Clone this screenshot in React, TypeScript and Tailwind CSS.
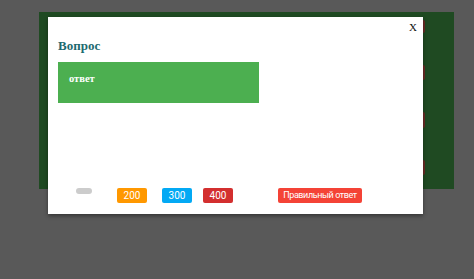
import React from "react";

const serif = { fontFamily: '"Liberation Serif", "DejaVu Serif", serif' };

export default function App() {
  return (
    <div
      className="relative w-[474px] h-[279px] overflow-hidden bg-[#595959] pt-[12px] pl-[39px]"
      style={{ fontFamily: 'Roboto, "Liberation Sans", Arial, sans-serif' }}
    >
      {/* board behind the modal */}
      <div className="w-[415px] h-[177px] bg-[#1f4a22] flex justify-end pr-[29px]">
        <div className="flex flex-col pt-[8px] gap-[32px]">
          <div className="w-[14px] h-[13px] bg-[#6b2b25] rounded-[2px]" />
          <div className="w-[14px] h-[15px] bg-[#6b2b25] rounded-[2px]" />
          <div className="w-[14px] h-[16px] bg-[#6b2b25] rounded-[2px]" />
          <div className="w-[14px] h-[15px] bg-[#6b2b25] rounded-[2px]" />
        </div>
      </div>

      {/* modal */}
      <div className="absolute left-[48px] top-[17px] w-[375px] h-[197px] bg-white shadow-[0_2px_4px_rgba(0,0,0,0.4)] flex flex-col px-[10px]">
        <button
          className="absolute right-[6px] top-[5px] text-[11px] leading-none text-[#111]"
          style={serif}
        >
          X
        </button>
        <h2
          className="mt-[22px] text-[13px] leading-[14px] font-bold text-[#1d6a70]"
          style={serif}
        >
          Вопрос
        </h2>
        <div className="mt-[9px] w-[201px] h-[41px] bg-[#4caf50] pl-[11px] pt-[11px]">
          <p className="text-[10.5px] leading-[12px] font-bold text-white" style={serif}>
            ответ
          </p>
        </div>
        <div className="mt-auto mb-[11px] flex items-start pl-[18px]">
          <div className="w-[16px] h-[6px] rounded-[3px] bg-[#cccccc]" />
          <button className="ml-[25px] w-[30px] h-[15px] rounded-[2px] bg-[#ff9800] text-white text-[10px] leading-[15px]">
            200
          </button>
          <button className="ml-[15px] w-[30px] h-[15px] rounded-[2px] bg-[#03a9f4] text-white text-[10px] leading-[15px]">
            300
          </button>
          <button className="ml-[11px] w-[30px] h-[15px] rounded-[2px] bg-[#d32f2f] text-white text-[10px] leading-[15px]">
            400
          </button>
          <button className="ml-[45px] w-[84px] h-[15px] rounded-[2px] bg-[#f44336] text-white text-[9px] tracking-[-0.4px] leading-[15px] whitespace-nowrap">
            Правильный ответ
          </button>
        </div>
      </div>
    </div>
  );
}
